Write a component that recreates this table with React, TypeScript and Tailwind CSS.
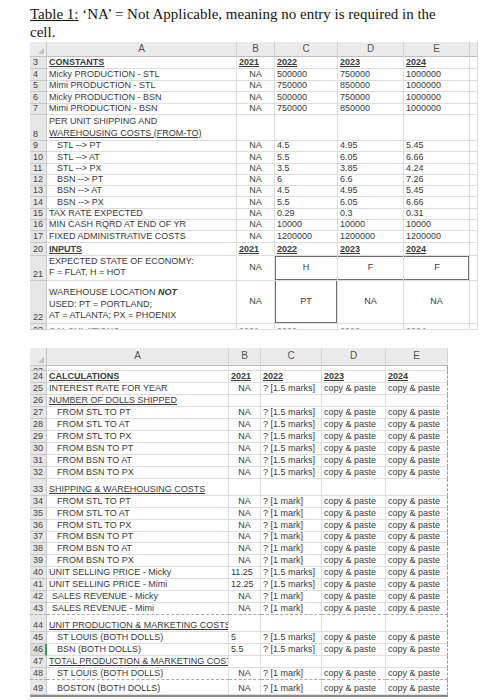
import React from "react";

type C = { v?: React.ReactNode; k?: string };

const G1 = "grid grid-cols-[17px_190px_38px_63px_66px_66px_8px]";
const G2 = "grid grid-cols-[17px_182px_32px_61px_64px_62px]";

const cellBase =
  "flex items-end overflow-hidden whitespace-nowrap border-r border-b border-[#dedede] px-[2px] pb-[1px]";
const gutBase =
  "flex items-end overflow-hidden whitespace-nowrap border-r border-b border-[#c9c9c9] bg-[#e6e6e6] pl-[3px] pb-[1px] text-[#454545]";

const BU = (s: string) => <span className="font-bold underline underline-offset-[1px]">{s}</span>;
const U = (s: string) => <span className="underline underline-offset-[1px]">{s}</span>;
const NA: C = { v: "NA", k: "justify-center" };
const NAc: C = { v: "NA", k: "justify-center !items-center !pb-0" };
const E: C = {};

function Row({
  grid,
  h,
  n,
  cells,
  gut = "",
  extra = "",
}: {
  grid: string;
  h: string;
  n: string;
  cells: C[];
  gut?: string;
  extra?: string;
}) {
  return (
    <div className={`${grid} ${h}`}>
      <div className={`${gutBase} ${gut}`}>{n}</div>
      {cells.map((c, i) => (
        <div key={i} className={`${cellBase} ${extra} ${c.k ?? ""}`}>
          {c.v}
        </div>
      ))}
    </div>
  );
}

function Header({ grid, h, cols }: { grid: string; h: string; cols: string[] }) {
  return (
    <div className={`${grid} ${h} bg-[#ebebeb] text-[10px] text-[#555]`}>
      <div className="flex items-end justify-end border-r border-b border-[#c4c4c4] p-[2px]">
        <svg width="6" height="6" viewBox="0 0 6 6">
          <polygon points="6,0 6,6 0,6" fill="#c2c2c2" />
        </svg>
      </div>
      {cols.map((c, i) => (
        <div
          key={i}
          className="flex items-center justify-center border-r border-b border-r-[#d4d4d4] border-b-[#bdbdbd]"
        >
          {c}
        </div>
      ))}
    </div>
  );
}

function Lines({ lines }: { lines: React.ReactNode[] }) {
  return (
    <div className="flex flex-col leading-[11.5px]">
      {lines.map((l, i) => (
        <span key={i}>{l}</span>
      ))}
    </div>
  );
}

const ind = "pl-[10px]";
const ind2 = "pl-[10px]";

function Table1() {
  const vals = (a: string, b: C, c: string, d: string, e: string, k = ""): C[] => [
    { v: a, k },
    b,
    { v: c },
    { v: d },
    { v: e },
    E,
  ];
  const box = "shadow-[inset_0_0_0_1px_#707070]";
  return (
    <div className="ml-[30px] mt-[1px] w-[448px] font-['Liberation_Sans',Arial,sans-serif] text-[9px] leading-none text-[#3a3a3a]">
      <Header grid={G1} h="h-[15px]" cols={["A", "B", "C", "D", "E", ""]} />
      <Row
        grid={G1}
        h="h-[12px]"
        n="3"
        cells={[{ v: BU("CONSTANTS") }, { v: BU("2021") }, { v: BU("2022") }, { v: BU("2023") }, { v: BU("2024") }, E]}
      />
      <Row grid={G1} h="h-[11.5px]" n="4" cells={vals("Micky PRODUCTION - STL", NA, "500000", "750000", "1000000")} />
      <Row grid={G1} h="h-[11.5px]" n="5" cells={vals("Mimi PRODUCTION - STL", NA, "750000", "850000", "1000000")} />
      <Row grid={G1} h="h-[11.5px]" n="6" cells={vals("Micky PRODUCTION - BSN", NA, "500000", "750000", "1000000")} />
      <Row grid={G1} h="h-[11.5px]" n="7" cells={vals("Mimi PRODUCTION - BSN", NA, "750000", "850000", "1000000")} />
      <Row
        grid={G1}
        h="h-[26px]"
        n="8"
        cells={[
          { v: <Lines lines={["PER UNIT SHIPPING AND", U("WAREHOUSING COSTS (FROM-TO)")]} /> },
          E,
          E,
          E,
          E,
          E,
        ]}
      />
      <Row grid={G1} h="h-[11.3px]" n="9" cells={vals("STL --> PT", NA, "4.5", "4.95", "5.45", ind)} />
      <Row grid={G1} h="h-[11.3px]" n="10" cells={vals("STL --> AT", NA, "5.5", "6.05", "6.66", ind)} />
      <Row grid={G1} h="h-[11.3px]" n="11" cells={vals("STL --> PX", NA, "3.5", "3.85", "4.24", ind)} />
      <Row grid={G1} h="h-[11.3px]" n="12" cells={vals("BSN --> PT", NA, "6", "6.6", "7.26", ind)} />
      <Row grid={G1} h="h-[11.3px]" n="13" cells={vals("BSN --> AT", NA, "4.5", "4.95", "5.45", ind)} />
      <Row grid={G1} h="h-[11.3px]" n="14" cells={vals("BSN --> PX", NA, "5.5", "6.05", "6.66", ind)} />
      <Row grid={G1} h="h-[11.3px]" n="15" cells={vals("TAX RATE EXPECTED", NA, "0.29", "0.3", "0.31")} />
      <Row grid={G1} h="h-[11.3px]" n="16" cells={vals("MIN CASH RQRD AT END OF YR", NA, "10000", "10000", "10000")} />
      <Row grid={G1} h="h-[11.5px]" n="17" cells={vals("FIXED ADMINISTRATIVE COSTS", NA, "1200000", "1200000", "1200000")} />
      <Row
        grid={G1}
        h="h-[13px]"
        n="20"
        cells={[{ v: BU("INPUTS") }, { v: BU("2021") }, { v: BU("2022") }, { v: BU("2023") }, { v: BU("2024") }, E]}
      />
      <Row
        grid={G1}
        h="h-[25px]"
        n="21"
        cells={[
          { v: <Lines lines={["EXPECTED STATE OF ECONOMY:", "F = FLAT, H = HOT"]} /> },
          { v: "NA", k: "justify-center !items-start !pb-0 pt-[7px]" },
          {
            k: `col-span-3 !p-0 !items-stretch ${box}`,
            v: (
              <div className="grid h-full w-full grid-cols-[63px_66px_66px] self-stretch">
                <div className="flex h-full items-center justify-center border-r border-[#e2e2e2]">H</div>
                <div className="flex h-full items-center justify-center border-r border-[#e2e2e2]">F</div>
                <div className="flex h-full items-center justify-center">F</div>
              </div>
            ),
          },
          E,
        ]}
      />
      <Row
        grid={G1}
        h="h-[43px]"
        n="22"
        cells={[
          {
            v: (
              <Lines
                lines={[
                  <>
                    WAREHOUSE LOCATION <b className="italic">NOT</b>
                  </>,
                  "USED: PT = PORTLAND;",
                  "AT = ATLANTA; PX = PHOENIX",
                ]}
              />
            ),
          },
          NAc,
          {
            v: "PT",
            k: "justify-center !items-center !pb-0 shadow-[inset_1px_0_0_#707070,inset_-1px_0_0_#707070,inset_0_-1px_0_#707070]",
          },
          NAc,
          NAc,
          E,
        ]}
      />
      <Row
        grid={G1}
        h="h-[6px]"
        n="23"
        gut="!items-start pt-[2px] text-[#777]"
        extra="!items-start pt-[3px] text-[#999]"
        cells={[{ v: BU("CALCULATIONS") }, { v: BU("2021") }, { v: BU("2022") }, { v: BU("2023") }, { v: BU("2024") }, E]}
      />
    </div>
  );
}

function Table2() {
  const r = (a: string, b: C, c: string, k = ""): C[] => [
    { v: a, k },
    b,
    { v: c },
    { v: "copy & paste" },
    { v: "copy & paste", k: "[border-right-style:dashed] border-r-[#9a9a9a]" },
  ];
  const empty = (a: React.ReactNode, k = ""): C[] => [
    { v: a, k },
    E,
    E,
    E,
    { k: "[border-right-style:dashed] border-r-[#9a9a9a]" },
  ];
  const num = (s: string): C => ({ v: s });
  const m15 = "? [1.5 marks]";
  const m1 = "? [1 mark]";
  const dashB = "[border-bottom-style:dashed] border-b-[#aaaaaa]";
  return (
    <div className="ml-[30px] mt-[18px] w-[418px] border-b-2 border-[#8a8a8a] font-['Liberation_Sans',Arial,sans-serif] text-[9px] leading-none text-[#3a3a3a]">
      <Header grid={G2} h="h-[18px]" cols={["A", "B", "C", "D", "E"]} />
      <Row grid={G2} h="h-[5px]" n="23" gut="!items-start !pb-0 pt-[1px] text-[#888]" cells={empty("")} />
      <Row
        grid={G2}
        h="h-[12px]"
        n="24"
        cells={[
          { v: BU("CALCULATIONS") },
          { v: BU("2021") },
          { v: BU("2022") },
          { v: BU("2023") },
          { v: BU("2024"), k: "[border-right-style:dashed] border-r-[#9a9a9a]" },
        ]}
      />
      <Row grid={G2} h="h-[12px]" n="25" cells={r("INTEREST RATE FOR YEAR", NA, m15)} />
      <Row grid={G2} h="h-[12px]" n="26" cells={empty(U("NUMBER OF DOLLS SHIPPED"))} />
      <Row grid={G2} h="h-[12px]" n="27" cells={r("FROM STL TO PT", NA, m15, ind2)} />
      <Row grid={G2} h="h-[12px]" n="28" cells={r("FROM STL TO AT", NA, m15, ind2)} />
      <Row grid={G2} h="h-[12px]" n="29" cells={r("FROM STL TO PX", NA, m15, ind2)} />
      <Row grid={G2} h="h-[12px]" n="30" cells={r("FROM BSN TO PT", NA, m15, ind2)} />
      <Row grid={G2} h="h-[12px]" n="31" cells={r("FROM BSN TO AT", NA, m15, ind2)} />
      <Row grid={G2} h="h-[12px]" n="32" cells={r("FROM BSN TO PX", NA, m15, ind2)} />
      <Row grid={G2} h="h-[17px]" n="33" cells={empty(U("SHIPPING & WAREHOUSING COSTS"))} />
      <Row grid={G2} h="h-[11.9px]" n="34" cells={r("FROM STL TO PT", NA, m1, ind2)} />
      <Row grid={G2} h="h-[11.9px]" n="35" cells={r("FROM STL TO AT", NA, m1, ind2)} />
      <Row grid={G2} h="h-[11.9px]" n="36" cells={r("FROM STL TO PX", NA, m1, ind2)} />
      <Row grid={G2} h="h-[11.9px]" n="37" cells={r("FROM BSN TO PT", NA, m1, ind2)} />
      <Row grid={G2} h="h-[11.9px]" n="38" cells={r("FROM BSN TO AT", NA, m1, ind2)} />
      <Row grid={G2} h="h-[11.9px]" n="39" cells={r("FROM BSN TO PX", NA, m1, ind2)} />
      <Row grid={G2} h="h-[11.9px]" n="40" cells={r("UNIT SELLING PRICE - Micky", num("11.25"), m15)} />
      <Row grid={G2} h="h-[11.9px]" n="41" cells={r("UNIT SELLING PRICE - Mimi", num("12.25"), m15)} />
      <Row grid={G2} h="h-[11.9px]" n="42" cells={r("SALES REVENUE - Micky", NA, m1, "pl-[5px]")} />
      <Row grid={G2} h="h-[11.9px]" n="43" extra={dashB} gut={dashB} cells={r("SALES REVENUE - Mimi", NA, m1, "pl-[5px]")} />
      <Row grid={G2} h="h-[17px]" n="44" cells={empty(U("UNIT PRODUCTION & MARKETING COSTS:"))} />
      <Row grid={G2} h="h-[12px]" n="45" cells={r("ST LOUIS (BOTH DOLLS)", num("5"), m15, ind2)} />
      <Row
        grid={G2}
        h="h-[12px]"
        n="46"
        gut="!bg-[#d9ddd9] text-[#2f7d46] border-r-2 !border-r-[#3f9a5a]"
        cells={r("BSN (BOTH DOLLS)", num("5.5"), m15, ind2)}
      />
      <Row grid={G2} h="h-[12px]" n="47" cells={empty(U("TOTAL PRODUCTION & MARKETING COSTS"))} />
      <Row grid={G2} h="h-[12px]" n="48" extra={dashB} gut={dashB} cells={r("ST LOUIS (BOTH DOLLS)", NA, m1, ind2)} />
      <Row grid={G2} h="h-[15px]" n="49" cells={r("BOSTON (BOTH DOLLS)", NA, m1, ind2)} />
    </div>
  );
}

export default function App() {
  return (
    <div className="h-[700px] w-[481px] overflow-hidden bg-white">
      <div className="w-[445px] pl-[30px] pt-[5px] font-['Liberation_Serif','Times_New_Roman',serif] text-[15px] leading-[18px] text-[#151515]">
        <span className="underline">Table 1:</span> ‘NA’ = Not Applicable, meaning no entry is required in the cell.
      </div>
      <Table1 />
      <Table2 />
    </div>
  );
}
